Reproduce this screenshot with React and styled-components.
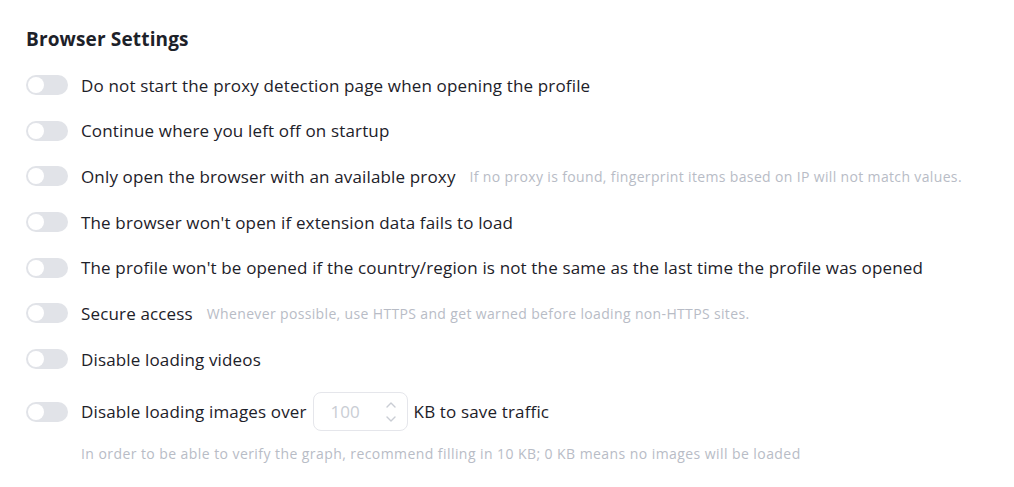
import styled, { createGlobalStyle } from "styled-components";

const GlobalStyle = createGlobalStyle`
  body {
    margin: 0;
    background: #fff;
    font-family: "Open Sans", "Noto Sans", sans-serif;
  }
`;

const settings = [
  { label: "Do not start the proxy detection page when opening the profile" },
  { label: "Continue where you left off on startup" },
  {
    label: "Only open the browser with an available proxy",
    hint: "If no proxy is found, fingerprint items based on IP will not match values.",
  },
  { label: "The browser won't open if extension data fails to load" },
  {
    label:
      "The profile won't be opened if the country/region is not the same as the last time the profile was opened",
  },
  {
    label: "Secure access",
    hint: "Whenever possible, use HTTPS and get warned before loading non-HTTPS sites.",
  },
  { label: "Disable loading videos" },
];

const App = () => {
  return (
    <Wrapper>
      <GlobalStyle />
      <Title>Browser Settings</Title>
      <List>
        {settings.map((s) => (
          <Row key={s.label}>
            <Switch />
            <Label>{s.label}</Label>
            {s.hint && <Hint>{s.hint}</Hint>}
          </Row>
        ))}
        {/* last row has a number input and a note below */}
        <ImageBlock>
          <Row $tall>
            <Switch />
            <Label>Disable loading images over</Label>
            <NumberBox>
              <span>100</span>
              <Arrows viewBox="0 0 12 26" width="12" height="26">
                <path d="M2 8 L6 4 L10 8" />
                <path d="M2 18 L6 22 L10 18" />
              </Arrows>
            </NumberBox>
            <Label>KB to save traffic</Label>
          </Row>
          <Note>
            In order to be able to verify the graph, recommend filling in 10 KB; 0 KB means no images will be loaded
          </Note>
        </ImageBlock>
      </List>
    </Wrapper>
  );
};

const Wrapper = styled.section`
  padding: 26px 26px 0;
`;

const Title = styled.h2`
  margin: 0 0 20px;
  font-size: 19px;
  font-weight: 700;
  letter-spacing: 0.15px;
  color: #1d2129;
  line-height: 26px;
`;

const List = styled.div`
  display: flex;
  flex-direction: column;
  gap: 19.7px;
`;

const Row = styled.div`
  display: flex;
  align-items: center;
  height: ${({ $tall }) => ($tall ? "40px" : "26px")};
`;

const Switch = styled.span`
  position: relative;
  flex: none;
  width: 42px;
  height: 20px;
  border-radius: 10px;
  background: #e1e3e8;
  margin-right: 13px;

  &::after {
    content: "";
    position: absolute;
    top: 2px;
    left: 2px;
    width: 16px;
    height: 16px;
    border-radius: 50%;
    background: #fff;
  }
`;

const Label = styled.span`
  font-size: 17px;
  letter-spacing: 0.15px;
  color: #1d2129;
  white-space: nowrap;
`;

const Hint = styled.span`
  margin-left: 14px;
  font-size: 14px;
  letter-spacing: 0.35px;
  color: #b8bcc6;
  white-space: nowrap;
`;

const NumberBox = styled.div`
  display: flex;
  align-items: center;
  justify-content: space-between;
  box-sizing: border-box;
  width: 95px;
  height: 39px;
  margin: 0 6px 0 6px;
  padding: 0 10px 0 17px;
  border: 1px solid #e5e6eb;
  border-radius: 8px;
  font-size: 17px;
  color: #c9cdd4;
`;

const Arrows = styled.svg`
  fill: none;
  stroke: #c9cdd4;
  stroke-width: 1.4;
  stroke-linecap: round;
  stroke-linejoin: round;
`;

const ImageBlock = styled.div`
  display: flex;
  flex-direction: column;
  gap: 12px;
`;

const Note = styled.div`
  padding-left: 55px;
  font-size: 14px;
  letter-spacing: 0.43px;
  color: #b8bcc6;
`;

export default App;
